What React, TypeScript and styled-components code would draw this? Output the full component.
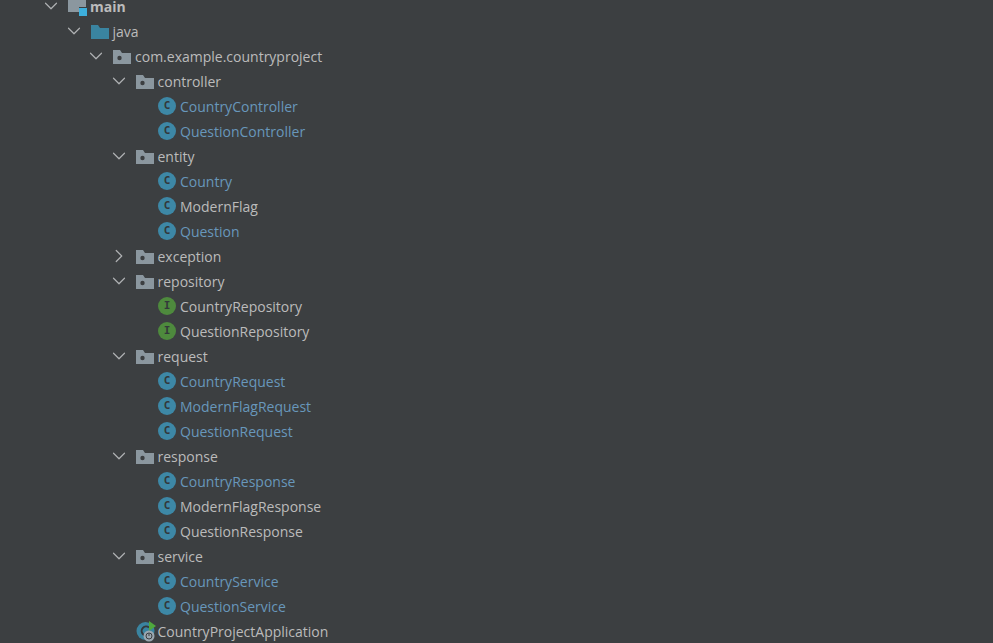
import React from "react"
import styled, { createGlobalStyle } from "styled-components"
import { ChevronDown, ChevronRight } from "lucide-react"

const GlobalStyle = createGlobalStyle`
    html, body {
        margin: 0;
        height: 100%;
        overflow: hidden;
        background: #3c3f41;
    }
`

const Tree = styled.div`
    margin-top: -6.5px;
    font-family: "Open Sans", "Noto Sans", sans-serif;
    font-size: 14px;
    color: #bbbbbb;
`

const Row = styled.div<{ $level: number }>`
    display: flex;
    align-items: center;
    height: 25px;
    padding-left: ${(p) => 44 + p.$level * 22.5}px;
`

const Arrow = styled.span`
    flex: 0 0 24px;
    width: 24px;
    display: flex;
    align-items: center;
    color: #afb1b3;
    svg {
        margin-left: -4px;
        display: block;
    }
`

const IconSlot = styled.span`
    flex: 0 0 22px;
    width: 22px;
    height: 18px;
    display: flex;
    align-items: center;
`

const Label = styled.span<{ $tone?: string; $bold?: boolean }>`
    white-space: nowrap;
    color: ${(p) => (p.$tone === "blue" ? "#6897bb" : "#bbbbbb")};
    font-weight: ${(p) => (p.$bold ? 700 : 400)};
`

const ClassBadge = styled.span<{ $green?: boolean }>`
    width: 18px;
    height: 18px;
    border-radius: 50%;
    background: ${(p) => (p.$green ? "#4e8a3d" : "#3d88a6")};
    color: #33383b;
    font-family: "DejaVu Sans Mono", monospace;
    font-size: 11px;
    font-weight: 700;
    line-height: 18px;
    text-align: center;
`

const FolderIcon = ({ color, dot }: { color: string; dot?: boolean }) => (
    <svg width="18" height="15" viewBox="0 0 18 15">
        <path d="M0 1h7l2 3h9v11H0z" fill={color} />
        {dot && <circle cx="6.5" cy="9" r="2.2" fill="#3c3f41" />}
    </svg>
)

const ModuleIcon = () => (
    <svg width="20" height="20" viewBox="0 0 20 20">
        <path d="M0 0h8l2 3h8v8h-7v5H0z" fill="#8b979f" />
        <rect x="11" y="12" width="8" height="8" fill="#3dafdc" />
    </svg>
)

const RunnableIcon = () => (
    <svg width="20" height="22" viewBox="0 0 20 22">
        <circle cx="9.5" cy="11" r="9" fill="#3a84a0" />
        <path d="M13 7.5a4.5 4.5 0 1 0 0 7" fill="none" stroke="#34383b" strokeWidth="2" />
        <path d="M13 1l7 5-7 5z" fill="#4fa83d" />
        <circle cx="13" cy="16" r="5.5" fill="#9aa7b0" />
        <circle cx="13" cy="16" r="3" fill="none" stroke="#3c3f41" strokeWidth="1" />
        <path d="M13 13.5v2.5" stroke="#3c3f41" strokeWidth="1" />
    </svg>
)

type Kind = "module" | "source" | "package" | "class" | "iface" | "app"

interface Item {
    name: string
    level: number
    kind: Kind
    open?: boolean
    blue?: boolean
}

const items: Item[] = [
    { name: "main", level: 0, kind: "module", open: true },
    { name: "java", level: 1, kind: "source", open: true },
    { name: "com.example.countryproject", level: 2, kind: "package", open: true },
    { name: "controller", level: 3, kind: "package", open: true },
    { name: "CountryController", level: 4, kind: "class", blue: true },
    { name: "QuestionController", level: 4, kind: "class", blue: true },
    { name: "entity", level: 3, kind: "package", open: true },
    { name: "Country", level: 4, kind: "class", blue: true },
    { name: "ModernFlag", level: 4, kind: "class" },
    { name: "Question", level: 4, kind: "class", blue: true },
    { name: "exception", level: 3, kind: "package", open: false },
    { name: "repository", level: 3, kind: "package", open: true },
    { name: "CountryRepository", level: 4, kind: "iface" },
    { name: "QuestionRepository", level: 4, kind: "iface" },
    { name: "request", level: 3, kind: "package", open: true },
    { name: "CountryRequest", level: 4, kind: "class", blue: true },
    { name: "ModernFlagRequest", level: 4, kind: "class", blue: true },
    { name: "QuestionRequest", level: 4, kind: "class", blue: true },
    { name: "response", level: 3, kind: "package", open: true },
    { name: "CountryResponse", level: 4, kind: "class", blue: true },
    { name: "ModernFlagResponse", level: 4, kind: "class" },
    { name: "QuestionResponse", level: 4, kind: "class" },
    { name: "service", level: 3, kind: "package", open: true },
    { name: "CountryService", level: 4, kind: "class", blue: true },
    { name: "QuestionService", level: 4, kind: "class", blue: true },
    { name: "CountryProjectApplication", level: 3, kind: "app" },
]

const renderIcon = (kind: Kind) => {
    switch (kind) {
        case "module":
            return <ModuleIcon />
        case "source":
            return <FolderIcon color="#3a84a0" />
        case "package":
            return <FolderIcon color="#8b979f" dot />
        case "class":
            return <ClassBadge>C</ClassBadge>
        case "iface":
            return <ClassBadge $green>I</ClassBadge>
        case "app":
            return <RunnableIcon />
    }
}

export default function App() {
    return (
        <>
            <GlobalStyle />
            <Tree>
                {items.map((item) => (
                    <Row key={item.name} $level={item.level}>
                        <Arrow>
                            {item.open === true && <ChevronDown size={22} strokeWidth={1.3} />}
                            {item.open === false && <ChevronRight size={22} strokeWidth={1.3} />}
                        </Arrow>
                        <IconSlot>{renderIcon(item.kind)}</IconSlot>
                        <Label $tone={item.blue ? "blue" : undefined} $bold={item.kind === "module"}>
                            {item.name}
                        </Label>
                    </Row>
                ))}
            </Tree>
        </>
    )
}
